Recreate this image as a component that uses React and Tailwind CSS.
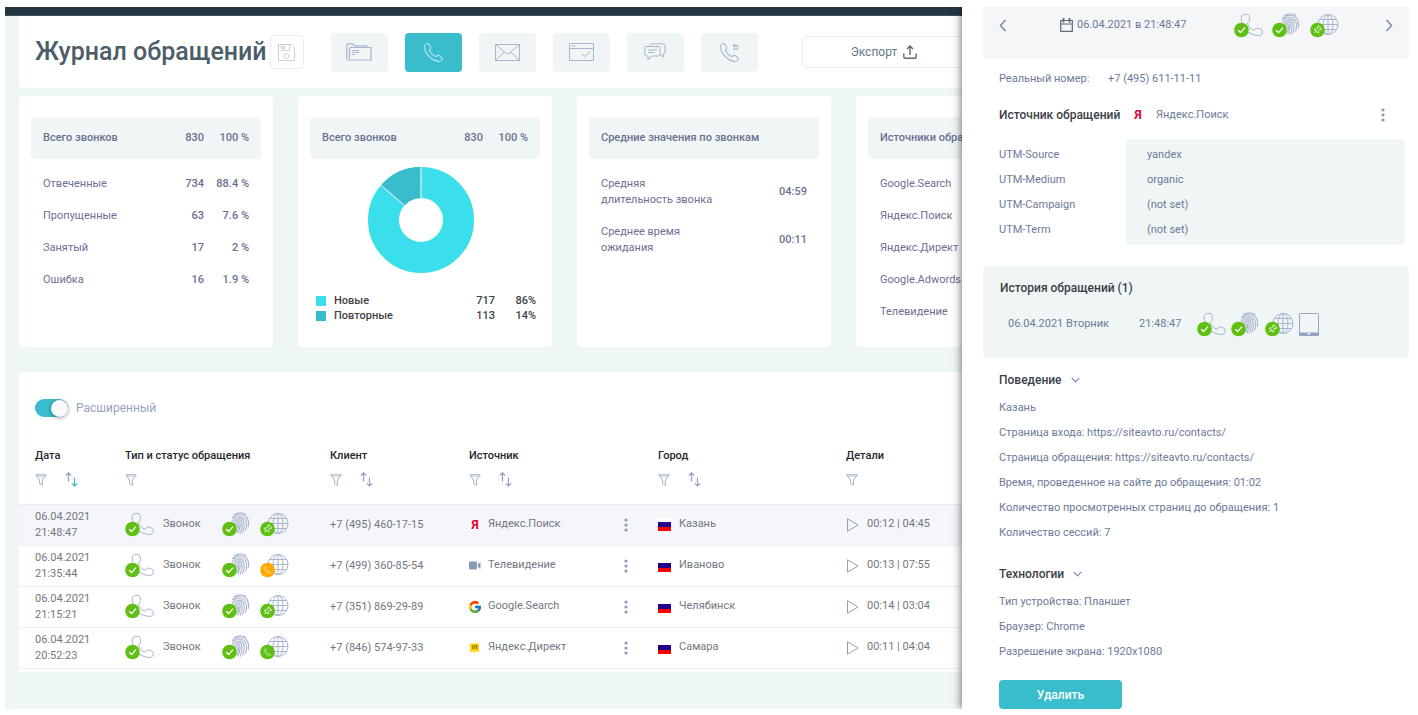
import { useState } from 'react'
import { FcGoogle } from 'react-icons/fc'
import { LuPin } from 'react-icons/lu'

const LINE = '#a9b4ce'

const calls = [
  { date: '06.04.2021', time: '21:48:47', phone: '+7 (495) 460-17-15', source: 'Яндекс.Поиск', icon: 'yandex', city: 'Казань', details: '00:12 | 04:45', site: 'pin' },
  { date: '06.04.2021', time: '21:35:44', phone: '+7 (499) 360-85-54', source: 'Телевидение', icon: 'tv', city: 'Иваново', details: '00:13 | 07:55', site: 'wait' },
  { date: '06.04.2021', time: '21:15:21', phone: '+7 (351) 869-29-89', source: 'Google.Search', icon: 'google', city: 'Челябинск', details: '00:14 | 03:04', site: 'pin' },
  { date: '06.04.2021', time: '20:52:23', phone: '+7 (846) 574-97-33', source: 'Яндекс.Директ', icon: 'direct', city: 'Самара', details: '00:11 | 04:04', site: 'call' },
]

const totals = [
  ['Отвеченные', '734', '88.4 %'],
  ['Пропущенные', '63', '7.6 %'],
  ['Занятый', '17', '2 %'],
  ['Ошибка', '16', '1.9 %'],
]

const sources = ['Google.Search', 'Яндекс.Поиск', 'Яндекс.Директ', 'Google.Adwords', 'Телевидение']

const utm = [
  ['UTM-Source', 'yandex'],
  ['UTM-Medium', 'organic'],
  ['UTM-Campaign', '(not set)'],
  ['UTM-Term', '(not set)'],
]

const behaviour = [
  ['Страница входа:', 'https://siteavto.ru/contacts/'],
  ['Страница обращения:', 'https://siteavto.ru/contacts/'],
  ['Время, проведенное на сайте до обращения:', '01:02'],
  ['Количество просмотренных страниц до обращения:', '1'],
  ['Количество сессий:', '7'],
]

const tech = [
  ['Тип устройства:', 'Планшет'],
  ['Браузер:', 'Chrome'],
  ['Разрешение экрана:', '1920x1080'],
]

// ─── Icons ───────────────────────────────────────────

function Handset({ size = 18, color = LINE, arrow = false }) {
  return (
    <svg width={size} height={size} viewBox="0 0 18 18" fill="none" stroke={color} strokeLinejoin="round" strokeLinecap="round">
      <path d="M2.2 .8C.9 1.6.3 3 .6 4.600C1.300 10.300 7.500 16.700 13.300 17.400C15 17.600 16.600 16.900 17.300 15.500C17.600 14.900 17.500 14.200 17 13.800L14.200 11.800C13.500 11.400 12.700 11.500 12.200 12.100L11.300 13.100C9.200 12.300 6 9.200 5 6.900L6 5.900C6.600 5.400 6.700 4.600 6.300 3.900L4.600 1.200C4.100 .4 3 .2 2.200 .8Z" />
      {arrow && <path d="M12.500 2.500h3a1.600 1.600 0 0 1 0 3.300h-2.500M14 1L12.500 2.500L14 4" />}
    </svg>
  )
}

// Small round mark in the lower left corner of a status icon
function Badge({ kind }) {
  return (
    <g>
      <circle cx="7.500" cy="17" r="7.300" fill={kind === 'wait' ? '#ffa800' : '#5fbf12'} />
      {kind === 'check' && <path d="M4.200 17.200L6.600 19.600L11 14.600" fill="none" stroke="#fff" strokeWidth="1.400" />}
      {kind === 'pin' && (
        <g transform="rotate(45 7.500 17)">
          <LuPin x="3" y="12.500" size={9} color="#fff" strokeWidth="2.500" />
        </g>
      )}
      {(kind === 'wait' || kind === 'call') && (
        <g transform="translate(4 13.500) scale(.4)">
          <path d="M2.200 .8C.9 1.600.3 3 .6 4.600C1.300 10.300 7.500 16.700 13.300 17.400C15 17.600 16.600 16.900 17.300 15.500L14.200 11.800L11.300 13.100C9.200 12.300 6 9.200 5 6.900L6.300 3.900L4.600 1.200Z" fill="none" stroke={kind === 'wait' ? '#ffe08a' : '#c4ec9c'} strokeWidth="2" />
        </g>
      )}
    </g>
  )
}

function StatusIcon({ type, badge = 'check' }) {
  return (
    <svg width="29" height="25" viewBox="0 0 29 25" className="shrink-0">
      {type === 'call' && (
        <path
          d="M9 12C7.500 8.500 6.500 5.500 7.500 3C8.500 1.200 13 .7 14.300 2C15.600 3.500 16 6.500 15 8.300C14.500 9 13.500 9.200 13.500 10C14 13.500 17 16.500 20 17.200C21.200 17.200 20.800 15.500 22.500 15.200C24.500 15 27 15.800 28 17.200C28.800 18.700 28 21.300 26.500 22.200C23 23 18 21.500 13.500 19"
          fill="none" stroke={LINE}
        />
      )}
      {type === 'finger' && (
        <g fill="none" stroke={LINE} strokeWidth="1.100" strokeLinecap="round">
          <path d="M12.500 2.400Q18 -.8 24 2.200" />
          <path d="M10.500 5.500C15 .8 22.500 1.200 25.300 6Q27.300 9.500 26.300 14.500" />
          <path d="M10.200 9C13 2.800 21.500 3 23.700 8Q25.500 13 23.500 18.300" />
          <path d="M11.500 11.500C12.500 4.800 20.500 4.800 21.800 9.500Q23 15 20.800 20.300" />
          <path d="M13.300 13.500C13 6.500 19 6.800 19.900 10.500Q20.700 16 18.300 21.200" />
          <path d="M15.200 15.500C15 13 14.700 9.500 16.500 9.500C19 9.500 18.500 16 16 21" />
          <path d="M16.700 11.800Q17 16.500 14.800 20" />
        </g>
      )}
      {type === 'globe' && (
        <g fill="none" stroke={LINE}>
          <circle cx="18" cy="11.500" r="10" />
          <ellipse cx="18" cy="11.500" rx="5" ry="10" />
          <path d="M18 1.500V21.500M8 11.500H28M9.800 6.500H26.200M9.800 16.500H26.200" />
        </g>
      )}
      <Badge kind={badge} />
    </svg>
  )
}

function Filter() {
  return (
    <svg width="12" height="12" viewBox="0 0 12 12" fill="none" stroke="#9fb0c4">
      <path d="M.7 .8H11.300L7.400 6V11.200L4.600 9.500V6Z" strokeLinejoin="round" />
      <path d="M1.500 2.200H10.500" strokeWidth=".6" />
    </svg>
  )
}

function Sort({ active }) {
  return (
    <svg width="13" height="15" viewBox="0 0 13 15" fill="none" strokeWidth="1.200">
      <path d="M3.500 9.500V1M.8 3.500L3.500 .9L6.200 3.500" stroke="#8fa0b8" />
      <path d="M9.500 5.500V14M6.800 11.400L9.500 14L12.200 11.400" stroke={active ? '#39bccb' : '#8fa0b8'} />
    </svg>
  )
}

function Dots() {
  return (
    <svg width="4" height="14" viewBox="0 0 4 14" fill="#8c9bb5">
      <circle cx="2" cy="2" r="1.600" />
      <circle cx="2" cy="7" r="1.600" />
      <circle cx="2" cy="12" r="1.600" />
    </svg>
  )
}

function Chevron({ dir }) {
  const d = { left: 'M6.500 1L1.500 6.500L6.500 12', right: 'M1.500 1L6.500 6.500L1.500 12' }[dir]
  return (
    <svg width="8" height="13" viewBox="0 0 8 13" fill="none" stroke="#7f8fae" strokeWidth="1.600">
      <path d={d} />
    </svg>
  )
}

function SourceIcon({ name }) {
  if (name === 'google') return <FcGoogle size={12} viewBox="4 4 40 40" />
  if (name === 'yandex') return <b className="w-3 text-center text-xs text-[#e4002b]">Я</b>
  if (name === 'tv') {
    return (
      <svg width="12" height="9" viewBox="0 0 12 9" fill="#8b9ab8">
        <rect x="0" y=".5" width="8" height="8" rx="1" />
        <path d="M9 3L11.500 1V8L9 6Z" />
      </svg>
    )
  }
  return (
    <svg width="12" height="10" viewBox="0 0 12 10">
      <path d="M1 .5H10V9.500L8 8L5.500 9.500L3.500 8L1 9.500Z" fill="#ffd400" />
      <path d="M3 3H8.500M3 5H6M7.500 3V6" stroke="#6b5b10" />
    </svg>
  )
}

function Flag() {
  return (
    <svg width="13" height="13" viewBox="0 0 13 13">
      <rect width="13" height="4" fill="#fff" />
      <rect y="4" width="13" height="5" fill="#23008c" />
      <rect y="9" width="13" height="4" fill="#f90000" />
    </svg>
  )
}

// ─── Header ──────────────────────────────────────────

function TypeTabs() {
  const [tab, setTab] = useState('calls')
  const tabs = [
    {
      id: 'all', label: 'Все обращения', icon: (
        <svg width="26" height="18" viewBox="0 0 26 18" fill="none" stroke={LINE} strokeWidth="1.200">
          <path d="M.8 15.800V2.200Q.8 .8 2.200 .8H7L8.500 2.800H20.500V4.500M3.500 15.500V5.500Q3.500 4.500 4.500 4.500H25V17H2.200Q.8 17 .8 15.800" />
          <path d="M6 7.500H13M6 9.500H13M6 11.500H9" />
        </svg>
      ),
    },
    { id: 'calls', label: 'Звонки', icon: <Handset color="#b5e6ec" size={19} /> },
    {
      id: 'mail', label: 'Письма', icon: (
        <svg width="25" height="17" viewBox="0 0 25 17" fill="none" stroke={LINE}>
          <rect x=".5" y=".5" width="24" height="16" />
          <path d="M.5 .5L10.500 9Q12.500 10.500 14.500 9L24.500 .5M.5 16.500L9.500 8M24.500 16.500L15.500 8" />
        </svg>
      ),
    },
    {
      id: 'forms', label: 'Заявки', icon: (
        <svg width="25" height="18" viewBox="0 0 25 18" fill="none" stroke={LINE}>
          <path d="M.5 .5H24.500V17.500H.5ZM.5 5.500H24.500M2.500 3H6.500M13 11L16 13.500L21 8.500" />
        </svg>
      ),
    },
    {
      id: 'chats', label: 'Чаты', icon: (
        <svg width="22" height="18" viewBox="0 0 22 18" fill="none" stroke={LINE} strokeLinejoin="round">
          <path d="M2 3.500H14Q16 3.500 16 5V11.500Q16 13 14 13H7.500L4 17V13H2.500Q.8 13 .8 11.500V5Q.8 3.500 2.500 3.500ZM5.500 3.500V2.500Q5.500 .8 7.500 .8H19.500Q21 .8 21 2.500V9Q21 10.500 19.500 10.500V14L16 11.500M4 7H13M4 9.500H10.500" />
        </svg>
      ),
    },
    { id: 'callback', label: 'Обратные звонки', icon: <Handset arrow size={19} /> },
  ]
  return (
    <div className="flex shrink-0 gap-[17px]">
      {tabs.map(t => (
        <button
          key={t.id}
          type="button"
          aria-label={t.label}
          onClick={() => setTab(t.id)}
          className={`flex h-[39px] w-[57px] items-center justify-center rounded ${tab === t.id ? 'bg-[#39bccb]' : 'bg-[#f0f6f6]'}`}
        >
          {t.icon}
        </button>
      ))}
    </div>
  )
}

function Header() {
  return (
    <header className="ml-[14px] flex h-[72px] items-center rounded-bl bg-white pl-4">
      <h1 className="shrink-0 text-[25px] leading-8 font-medium text-[#4d5d68]">Журнал обращений</h1>
      <button type="button" aria-label="Сохранить" className="ml-[3px] flex size-[34px] shrink-0 items-center justify-center rounded border border-[#ecedf0]">
        <svg width="17" height="17" viewBox="0 0 17 17" fill="none" stroke="#c9cede">
          <path d="M.5 .5H13L16.500 4V16.500H.5ZM3.500 .5V6.500H11.500V.5M5 2.500H7V4.500H5Z" />
          <circle cx="8.500" cy="12" r="2.500" />
        </svg>
      </button>
      <div className="ml-[27px] shrink-0">
        <TypeTabs />
      </div>
      <button type="button" className="ml-11 flex h-8 w-[213px] shrink-0 items-center rounded border border-[#e9eff0] pl-12 text-xs text-[#66788a]">
        Экспорт
        <svg width="14" height="14" viewBox="0 0 14 14" fill="none" stroke="#5b6b76" strokeWidth="1.400" className="ml-[6px]">
          <path d="M.8 8.500V11.700Q.8 13.200 2.300 13.200H11.700Q13.200 13.200 13.200 11.700V8.500M7 10V1.200M4 4L7 1L10 4" />
        </svg>
      </button>
    </header>
  )
}

// ─── Summary cards ───────────────────────────────────

function Card({ children }) {
  return <section className="h-[251px] w-[254px] shrink-0 rounded bg-white px-3 pt-[21px]">{children}</section>
}

function CardTitle({ title, count, share }) {
  return (
    <h2 className="flex h-[42px] items-center rounded bg-[#f0f6f6] px-3 font-medium">
      <span className="flex-1 whitespace-nowrap">{title}</span>
      {count && <span>{count}</span>}
      {share && <span className="w-[45px] text-right">{share}</span>}
    </h2>
  )
}

function Donut() {
  return (
    <svg width="106" height="106" viewBox="0 0 106 106" className="mx-auto block">
      <circle cx="53" cy="53" r="37.500" fill="none" stroke="#3bdeeb" strokeWidth="31" />
      <circle
        cx="53" cy="53" r="37.500" fill="none" stroke="#39bccb" strokeWidth="31"
        pathLength="100" strokeDasharray="13.600 86.400" transform="rotate(-139 53 53)"
      />
      <path d="M53 0V31M13 18.200L36.500 38.600" stroke="#fff" />
    </svg>
  )
}

function Summary() {
  return (
    <div className="mt-2 ml-[14px] flex gap-[25px] text-[11px] text-[#6a7090]">
      <Card>
        <CardTitle title="Всего звонков" count="830" share="100 %" />
        <table className="mt-[9px] w-full">
          <tbody>
            {totals.map(([name, count, share]) => (
              <tr key={name} className="h-8">
                <th scope="row" className="pl-3 text-left font-normal">{name}</th>
                <td className="text-right font-medium">{count}</td>
                <td className="w-[57px] pr-3 text-right font-medium">{share}</td>
              </tr>
            ))}
          </tbody>
        </table>
      </Card>

      <Card>
        <CardTitle title="Всего звонков" count="830" share="100 %" />
        <div className="mt-2 pr-[9px]">
          <Donut />
        </div>
        <table className="mt-5 w-full font-medium text-[#3f4348]">
          <tbody>
            <tr className="h-[15px] leading-[15px]">
              <td className="w-6 pl-[6px]"><span className="block size-[10px] bg-[#3bdeeb]" /></td>
              <th scope="row" className="text-left font-medium">Новые</th>
              <td className="text-right">717</td>
              <td className="w-[45px] pr-1 text-right">86%</td>
            </tr>
            <tr className="h-[15px] leading-[15px]">
              <td className="w-6 pl-[6px]"><span className="block size-[10px] bg-[#39bccb]" /></td>
              <th scope="row" className="text-left font-medium">Повторные</th>
              <td className="text-right">113</td>
              <td className="w-[45px] pr-1 text-right">14%</td>
            </tr>
          </tbody>
        </table>
      </Card>

      <Card>
        <CardTitle title="Средние значения по звонкам" />
        <dl className="mt-[17px] flex flex-col gap-4 px-3 leading-4">
          <div className="flex items-center justify-between">
            <dt>Средняя<br />длительность звонка</dt>
            <dd className="font-medium">04:59</dd>
          </div>
          <div className="flex items-center justify-between">
            <dt>Среднее время<br />ожидания</dt>
            <dd className="font-medium">00:11</dd>
          </div>
        </dl>
      </Card>

      <Card>
        <CardTitle title="Источники обращений" />
        <ul className="mt-[9px] pl-3">
          {sources.map(s => <li key={s} className="leading-8">{s}</li>)}
        </ul>
      </Card>
    </div>
  )
}

// ─── Journal table ───────────────────────────────────

function HeadCell({ title, sort, active, className = '' }) {
  return (
    <th scope="col" className={`p-0 pb-4 text-left font-medium ${className}`}>
      {title}
      <div className="mt-[7px] flex h-4 items-center gap-[18px]">
        <button type="button" aria-label={`Фильтр: ${title}`}><Filter /></button>
        {sort && <button type="button" aria-label={`Сортировка: ${title}`}><Sort active={active} /></button>}
      </div>
    </th>
  )
}

function Journal() {
  const [extended, setExtended] = useState(true)
  return (
    <section className="mt-[25px] ml-[14px] rounded-tl bg-white pt-[27px] pb-[3px]">
      <label className="ml-4 flex w-max cursor-pointer items-center text-xs text-[#95a4bd]">
        <input type="checkbox" checked={extended} onChange={e => setExtended(e.target.checked)} className="peer sr-only" />
        <span className="mr-2 flex h-[18px] w-[33px] items-center justify-start rounded-full bg-[#c5cdd8] peer-checked:justify-end peer-checked:bg-[#39bccb]">
          <span className="size-[17px] rounded-full bg-[#fafafa] shadow-[0_1px_4px_rgba(0,0,0,0.4)]" />
        </span>
        Расширенный
      </label>

      <table className="mt-[31px] w-full table-fixed border-collapse text-[11px] text-[#73777f]">
        <colgroup>
          <col className="w-[106px]" />
          <col className="w-[205px]" />
          <col className="w-[139px]" />
          <col className="w-[189px]" />
          <col className="w-[188px]" />
          <col />
        </colgroup>
        <thead className="text-[#26282c]">
          <tr className="border-b border-[#e8ebf1]">
            <HeadCell title="Дата" sort active className="pl-4" />
            <HeadCell title="Тип и статус обращения" />
            <HeadCell title="Клиент" sort />
            <HeadCell title="Источник" sort />
            <HeadCell title="Город" sort />
            <HeadCell title="Детали" />
          </tr>
        </thead>
        <tbody>
          {calls.map((c, i) => (
            <tr key={c.time} className={`h-[41px] border-b border-[#eef0f6] ${i === 0 ? 'bg-[#f4f6fa]' : ''}`}>
              <td className="pt-px pl-4 leading-4">{c.date}<br />{c.time}</td>
              <td>
                <div className="flex items-center">
                  <StatusIcon type="call" />
                  <span className="ml-[9px] w-[59px]">Звонок</span>
                  <StatusIcon type="finger" />
                  <span className="w-[9px]" />
                  <StatusIcon type="globe" badge={c.site} />
                </div>
              </td>
              <td className="pt-px">{c.phone}</td>
              <td>
                <div className="flex items-center">
                  <SourceIcon name={c.icon} />
                  <span className="ml-[7px] w-[136px]">{c.source}</span>
                  <button type="button" aria-label="Действия"><Dots /></button>
                </div>
              </td>
              <td>
                <div className="flex items-center gap-2"><Flag />{c.city}</div>
              </td>
              <td>
                <div className="flex items-center gap-2">
                  <button type="button" aria-label="Прослушать">
                    <svg width="13" height="14" viewBox="0 0 13 14" fill="none" stroke="#8fa0b8" strokeLinejoin="round">
                      <path d="M1.500 .8L12 7L1.500 13.200Z" />
                    </svg>
                  </button>
                  {c.details}
                </div>
              </td>
            </tr>
          ))}
        </tbody>
      </table>
    </section>
  )
}

// ─── Details panel ───────────────────────────────────

function Group({ title, children }) {
  return (
    <section className="pl-4">
      <h3>
        <button type="button" className="flex h-6 items-center gap-[9px] text-xs font-medium text-[#3a3f48]">
          {title}
          <svg width="9" height="6" viewBox="0 0 9 6" fill="none" stroke="#7f8fae" strokeWidth="1.200"><path d="M.7 .8L4.500 4.800L8.300 .8" /></svg>
        </button>
      </h3>
      <ul className="mt-[3px] leading-[25px]">{children}</ul>
    </section>
  )
}

function Details() {
  return (
    <aside className="relative w-[456px] shrink-0 bg-white pr-[9px] pl-[21px] text-[11px] text-[#6c7a98] shadow-[0_0_9px_rgba(0,0,0,0.65)]">
      <div className="flex h-[52px] items-center rounded-b bg-[#f4f6f8] px-4 pb-4">
        <button type="button" aria-label="Предыдущее"><Chevron dir="left" /></button>
        <svg width="13" height="14" viewBox="0 0 13 14" fill="none" stroke="#5b6d78" strokeWidth="1.200" className="ml-[53px]">
          <path d="M.7 2.500H12.300V13.300H.7ZM.7 6H12.300" />
          <path d="M3.500 0V4.500M9.500 0V4.500" strokeWidth="1.800" />
        </svg>
        <span className="ml-1">06.04.2021 в 21:48:47</span>
        <div className="ml-auto flex gap-[9px]">
          <StatusIcon type="call" />
          <StatusIcon type="finger" />
          <StatusIcon type="globe" badge="pin" />
        </div>
        <button type="button" aria-label="Следующее" className="ml-[46px]"><Chevron dir="right" /></button>
      </div>

      <p className="mt-3 flex h-4 items-center pl-4">
        <span className="w-[109px]">Реальный номер:</span>+7 (495) 611-11-11
      </p>

      <div className="mt-[18px] flex h-5 items-center pr-6 pl-4">
        <h3 className="w-[133px] text-xs font-medium text-[#3a3f48]">Источник обращений</h3>
        <SourceIcon name="yandex" />
        <span className="ml-3">Яндекс.Поиск</span>
        <button type="button" aria-label="Действия" className="ml-auto"><Dots /></button>
      </div>

      <dl className="mt-[14px] mr-1 ml-4 flex leading-[25px]">
        <div className="w-[127px] pt-[3px]">
          {utm.map(([key]) => <dt key={key}>{key}</dt>)}
        </div>
        <div className="flex-1 rounded bg-[#f0f6f6] py-[3px] pl-[21px]">
          {utm.map(([key, value]) => <dd key={key}>{value}</dd>)}
        </div>
      </dl>

      <section className="mt-[21px] h-[92px] rounded bg-[#f0f6f6] pt-3 pl-[17px]">
        <h3 className="text-xs leading-5 font-medium text-[#3a3f48]">История обращений (1)</h3>
        <div className="mt-[14px] flex items-center pl-2">
          <span className="w-[131px]">06.04.2021 Вторник</span>
          <span className="w-[58px]">21:48:47</span>
          <div className="flex items-center gap-[5px]">
            <StatusIcon type="call" />
            <StatusIcon type="finger" />
            <StatusIcon type="globe" badge="pin" />
            <svg width="20" height="23" viewBox="0 0 20 23" fill="none" stroke="#94a2c4">
              <rect x=".5" y=".5" width="19" height="22" rx="1" />
              <path d="M0 21H20" strokeWidth="3" />
              <rect x="9" y="20" width="2" height="1.500" fill="#fff" stroke="none" />
            </svg>
          </div>
        </div>
      </section>

      <div className="mt-[10px]">
        <Group title="Поведение">
          <li>Казань</li>
          {behaviour.map(([key, value]) => <li key={key}>{key} {value}</li>)}
        </Group>
      </div>
      <div className="mt-[17px]">
        <Group title="Технологии">
          {tech.map(([key, value]) => <li key={key}>{key} {value}</li>)}
        </Group>
      </div>

      <button type="button" className="mt-4 ml-4 block h-[29px] w-[123px] rounded bg-[#39bccb] text-xs font-medium text-white">
        Удалить
      </button>
    </aside>
  )
}

export default function App() {
  return (
    <div className="min-h-screen bg-white py-[7px] pl-[5px] font-[Roboto,sans-serif]">
      <div className="flex overflow-hidden">
        <main className="min-w-0 flex-1 overflow-hidden bg-[#eff6f6]">
          <div className="h-[9px] border-b border-[#3d4f5a] bg-[#253642]" />
          <Header />
          <Summary />
          <Journal />
        </main>
        <Details />
      </div>
    </div>
  )
}
